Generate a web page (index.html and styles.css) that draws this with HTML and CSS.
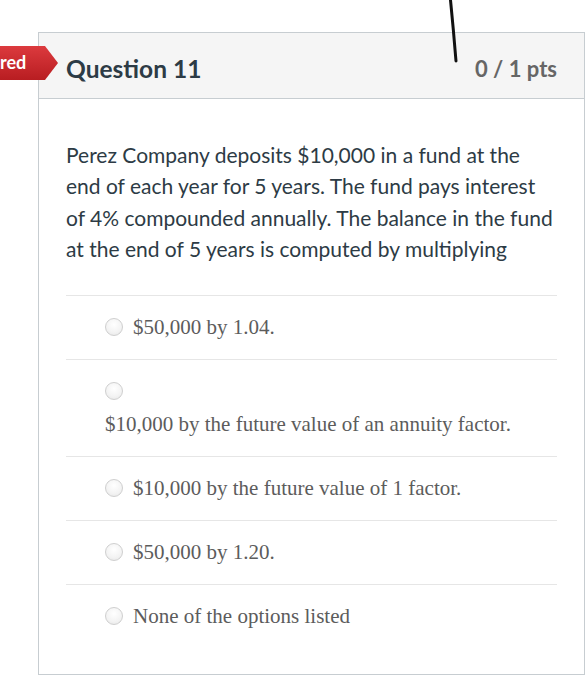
FILE: index.html
```html
<!DOCTYPE html>
<html>
<head>
<meta charset="utf-8">
<link rel="stylesheet" href="styles.css">
</head>
<body>
<div class="page">
  <div class="badge"><span>red</span></div>
  <svg class="pen" width="586" height="70" viewBox="0 0 586 70"><path d="M450.5 0 Q453.5 30 456 61" fill="none" stroke="#111" stroke-width="3" stroke-linecap="round"/></svg>
  <div class="card">
    <div class="card-header">
      <h2 class="title">Question 11</h2>
      <div class="pts">0 / 1 pts</div>
    </div>
    <div class="card-body">
      <p class="question">Perez Company deposits $10,000 in a fund at the end of each year for 5 years. The fund pays interest of 4% compounded annually. The balance in the fund at the end of 5 years is computed by multiplying</p>
      <div class="answers">
        <div class="answer"><span class="radio"></span><span class="label">$50,000 by 1.04.</span></div>
        <div class="answer stacked"><span class="radio"></span><span class="label">$10,000 by the future value of an annuity factor.</span></div>
        <div class="answer"><span class="radio"></span><span class="label">$10,000 by the future value of 1 factor.</span></div>
        <div class="answer"><span class="radio"></span><span class="label">$50,000 by 1.20.</span></div>
        <div class="answer"><span class="radio"></span><span class="label">None of the options listed</span></div>
      </div>
    </div>
  </div>
</div>
</body>
</html>
```
FILE: styles.css
```css
html, body {
  margin: 0;
  padding: 0;
  background: #fff;
}
.page {
  position: relative;
  width: 586px;
  height: 700px;
  padding: 32px 1px 0 38px;
  box-sizing: border-box;
  font-family: Lato, "Open Sans", sans-serif;
}
.badge {
  position: absolute;
  left: 0;
  top: 46px;
  width: 58px;
  height: 34px;
  clip-path: polygon(0 0, 45px 0, 58px 17px, 45px 34px, 0 34px);
  background: linear-gradient(#dc3a3e, #b81d21);
  color: #fff;
  font-weight: 700;
  font-size: 18px;
  line-height: 33px;
  z-index: 2;
}
.badge span {
  display: block;
  margin-left: 0;
}
.pen {
  position: absolute;
  left: 0;
  top: 0;
  z-index: 3;
  pointer-events: none;
}
.card {
  border: 1px solid #c7cdd1;
  height: 643px;
  box-sizing: border-box;
}
.card-header {
  height: 66px;
  box-sizing: border-box;
  background: #f5f5f5;
  border-bottom: 1px solid #c7cdd1;
  display: flex;
  align-items: center;
  justify-content: space-between;
  padding: 6px 27px 0 27px;
}
.title {
  margin: 0;
  font-size: 24.5px;
  font-weight: 700;
  color: #2d3b45;
}
.pts {
  font-size: 22px;
  font-weight: 700;
  color: #666;
}
.card-body {
  padding: 40px 27px 0 27px;
}
.question {
  margin: 0 0 31px 0;
  font-size: 21px;
  line-height: 31.3px;
  color: #2d3b45;
}
.answer {
  border-top: 1px solid #e6e6e6;
  padding: 20px 0 21px 39px;
  display: flex;
  align-items: center;
  gap: 10px;
  min-height: 22px;
}
.answer.stacked {
  flex-direction: column;
  align-items: flex-start;
  gap: 11px;
}
.answer.stacked .radio {
  margin: 2px 0;
}
.radio {
  width: 16px;
  height: 16px;
  border-radius: 50%;
  border: 1px solid #cfcfcf;
  background: radial-gradient(circle at 50% 35%, #ffffff 0%, #f3f3f3 60%, #e4e4e4 100%);
  flex: none;
}
.label {
  font-family: "Liberation Serif", "Times New Roman", serif;
  font-size: 21px;
  line-height: 22px;
  color: #5c5c5c;
}
```
